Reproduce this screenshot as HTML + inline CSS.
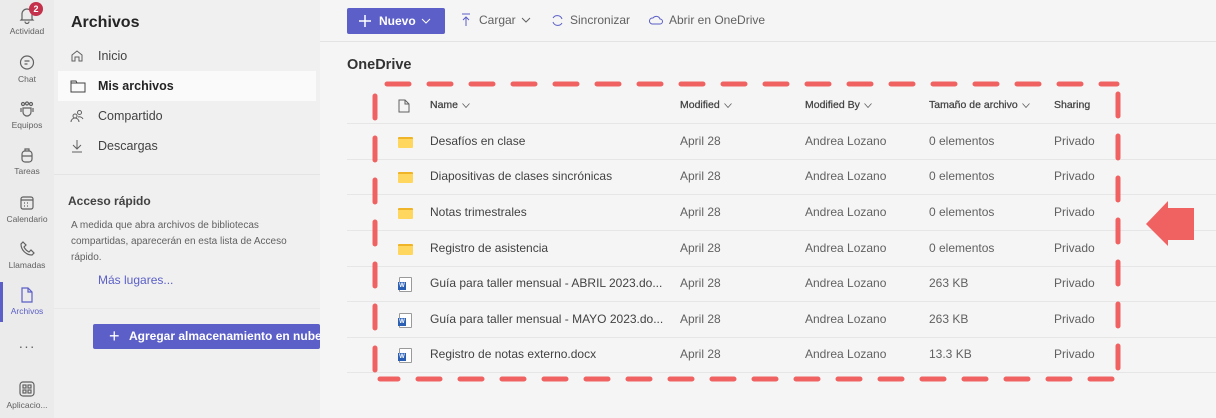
<!DOCTYPE html>
<html><head><meta charset="utf-8"><style>
*{box-sizing:border-box;margin:0;padding:0}
body{width:1216px;height:418px;overflow:hidden;background:#f5f5f5;font-family:"Liberation Sans",sans-serif;position:relative;color:#242424}
.rail{position:absolute;left:0;top:0;width:54px;height:418px;background:#ebebeb}
.ri{position:absolute;left:0;width:54px;text-align:center;font-size:8.5px;color:#616161}
.ri svg{display:block;margin:0 auto 2px}
.side{position:absolute;left:54px;top:0;width:266px;height:418px;background:#f0f0f0}
.main{position:absolute;left:320px;top:0;right:0;height:418px;background:#f5f5f5}
.abs{position:absolute}
.nav{position:absolute;left:0;width:262px;height:30px;font-size:12.5px;color:#424242;line-height:30px;padding-left:44px}
.nav svg{position:absolute;left:16px;top:8px}
.row{position:absolute;left:347px;width:869px;height:36px;border-bottom:1px solid #e6e6e6;font-size:12px;color:#616161;line-height:35px}
.row span{position:absolute}
.row .n{left:83px;color:#424242}
.c2{left:333px}.c3{left:458px}.c4{left:582px}.c5{left:707px}
.hd{font-size:10.5px;color:#424242}
.hd span{-webkit-text-stroke:0.25px #424242}
.ch{display:inline-block;width:8px;height:5px;margin-left:4px;vertical-align:middle}
i.f{position:absolute;left:51px;top:13px;width:15px;height:11px;background:#ffd75e;border-top:2px solid #f0b429;border-radius:1px}
i.w{position:absolute;left:52px;top:11px;width:13px;height:15px;border:1px solid #9a9a9a;background:#fff;border-radius:1px}
i.w:after{content:"W";position:absolute;left:-2px;top:4px;width:8px;height:8px;background:#2b5fb4;color:#fff;font-size:6px;line-height:8px;text-align:center;font-style:normal;font-weight:bold}
</style></head><body>
<div class="rail">
 <div class="ri" style="top:6px"><svg width="18" height="18" viewBox="0 0 18 18" fill="none" stroke="#616161" stroke-width="1.2"><path d="M4 13V8a5 5 0 0110 0v5l1 1H3z"/><path d="M7 15.5a2 2 0 004 0"/></svg>Actividad</div>
 <div style="position:absolute;left:29px;top:2px;width:14px;height:14px;border-radius:7px;background:#c4314b;color:#fff;font-size:9px;font-weight:bold;text-align:center;line-height:14px">2</div>
 <div class="ri" style="top:54px"><svg width="18" height="18" viewBox="0 0 18 18" fill="none" stroke="#616161" stroke-width="1.2"><circle cx="9" cy="8.5" r="6.5"/><path d="M6.5 7h5M6.5 10h3"/></svg>Chat</div>
 <div class="ri" style="top:100px"><svg width="20" height="18" viewBox="0 0 20 18" fill="none" stroke="#616161" stroke-width="1.2"><circle cx="6" cy="4" r="1.5"/><circle cx="10" cy="3.5" r="1.5"/><circle cx="14" cy="4" r="1.5"/><path d="M6 8h8v4a4 4 0 01-8 0z"/><path d="M4 8v4M16 8v4"/></svg>Equipos</div>
 <div class="ri" style="top:146px"><svg width="18" height="18" viewBox="0 0 18 18" fill="none" stroke="#616161" stroke-width="1.2"><rect x="4" y="5" width="10" height="11" rx="3"/><path d="M7 5V3h4v2M4 10h10"/></svg>Tareas</div>
 <div class="ri" style="top:194px"><svg width="18" height="18" viewBox="0 0 18 18" fill="none" stroke="#616161" stroke-width="1.2"><rect x="3" y="3" width="12" height="12" rx="2"/><path d="M3 6h12M6 9h1M9 9h1M6 12h1M9 12h1"/></svg>Calendario</div>
 <div class="ri" style="top:240px"><svg width="18" height="18" viewBox="0 0 18 18" fill="none" stroke="#616161" stroke-width="1.2"><path d="M5 2l3 3-2 2c1 2 3 4 5 5l2-2 3 3-2 2C8 15 3 10 3 4z"/></svg>Llamadas</div>
 <div style="position:absolute;left:0;top:282px;width:3px;height:40px;background:#5b5fc7"></div>
 <div class="ri" style="top:286px;color:#5b5fc7"><svg width="18" height="18" viewBox="0 0 18 18" fill="none" stroke="#5b5fc7" stroke-width="1.2"><path d="M4 2h6l4 4v10H4z"/><path d="M10 2v4h4"/></svg>Archivos</div>
 <div class="ri" style="top:338px;font-size:14px;letter-spacing:1px">···</div>
 <div class="ri" style="top:380px"><svg width="18" height="18" viewBox="0 0 18 18" fill="none" stroke="#616161" stroke-width="1.2"><rect x="2" y="2" width="14" height="14" rx="3"/><rect x="5" y="5" width="3" height="3"/><rect x="10" y="5" width="3" height="3"/><rect x="5" y="10" width="3" height="3"/><rect x="10" y="10" width="3" height="3"/></svg>Aplicacio...</div>
</div>
<div class="side">
 <div class="abs" style="left:17px;top:14px;font-size:16px;font-weight:bold">Archivos</div>
 <div class="nav" style="top:41px"><svg width="14" height="14" viewBox="0 0 14 14" fill="none" stroke="#616161" stroke-width="1"><path d="M2 6l5-4 5 4v6H9V8H5v4H2z"/></svg>Inicio</div>
 <div class="nav" style="top:71px;background:#fafafa;color:#242424;font-weight:bold;width:258px;left:4px;padding-left:40px"><svg width="16" height="14" viewBox="0 0 16 14" fill="none" stroke="#424242" stroke-width="1" style="left:12px"><path d="M1 2h5l1 2h8v9H1z"/><path d="M1 4h14"/></svg>Mis archivos</div>
 <div class="nav" style="top:101px"><svg width="14" height="14" viewBox="0 0 14 14" fill="none" stroke="#616161" stroke-width="1"><circle cx="5" cy="7" r="2"/><circle cx="9.5" cy="3.5" r="2"/><path d="M1 13a4 4 0 018 0M8 8a4 4 0 015 2"/></svg>Compartido</div>
 <div class="nav" style="top:131px"><svg width="14" height="14" viewBox="0 0 14 14" fill="none" stroke="#616161" stroke-width="1"><path d="M7 1v9M3 6l4 4 4-4M2 13h10"/></svg>Descargas</div>
 <div class="abs" style="left:0;top:174px;width:266px;border-top:1px solid #e4e4e4"></div>
 <div class="abs" style="left:14px;top:194px;font-size:12px;color:#424242;font-weight:bold">Acceso rápido</div>
 <div class="abs" style="left:17px;top:218px;width:230px;font-size:10px;color:#616161;line-height:16px">A medida que abra archivos de bibliotecas compartidas, aparecerán en esta lista de Acceso rápido.</div>
 <div class="abs" style="left:44px;top:273px;font-size:12px;color:#5b5fc7">Más lugares...</div>
 <div class="abs" style="left:0;top:308px;width:266px;border-top:1px solid #e8e8e8"></div>
 <div class="abs" style="left:39px;top:324px;width:227px;height:25px;background:#5b5fc7;border-radius:2px;color:#fff;font-size:12px;font-weight:bold;line-height:25px;padding-left:36px;white-space:nowrap;overflow:hidden">Agregar almacenamiento en nube<span style="position:absolute;left:16px;top:0;font-size:18px;font-weight:normal">+</span></div>
</div>
<div class="main">
 <div class="abs" style="left:0;top:0;width:896px;height:42px;border-bottom:1px solid #e3e3e3;background:#f5f5f5"></div>
 <div class="abs" style="left:27px;top:8px;width:98px;height:26px;background:#5b5fc7;border-radius:2px;color:#fff;font-size:12px;font-weight:bold;line-height:26px;padding-left:32px">Nuevo<svg style="position:absolute;left:12px;top:7px" width="12" height="12" viewBox="0 0 12 12" stroke="#fff" stroke-width="1.5"><path d="M6 0v12M0 6h12"/></svg><svg style="position:absolute;left:74px;top:10px" width="10" height="6" viewBox="0 0 10 6" fill="none" stroke="#fff"><path d="M1 1l4 4 4-4"/></svg></div>
 <svg class="abs" style="left:141px;top:13px" width="10" height="14" viewBox="0 0 10 14" fill="none" stroke="#5b5fc7"><path d="M1 1h8M5 13V4M2 7l3-3 3 3"/></svg>
 <div class="abs" style="left:159px;top:13px;font-size:12px;color:#616161">Cargar</div>
 <svg class="abs" style="left:201px;top:17px" width="10" height="6" viewBox="0 0 10 6" fill="none" stroke="#616161"><path d="M1 1l4 4 4-4"/></svg>
 <svg class="abs" style="left:231px;top:14px" width="13" height="13" viewBox="0 0 13 13" fill="none" stroke="#5b5fc7"><path d="M11 5A5 5 0 002 4M2 8a5 5 0 009 1"/></svg>
 <div class="abs" style="left:250px;top:13px;font-size:12px;color:#616161">Sincronizar</div>
 <svg class="abs" style="left:329px;top:15px" width="14" height="10" viewBox="0 0 14 10" fill="none" stroke="#5b5fc7"><path d="M3 9h8a2.5 2.5 0 000-5 4 4 0 00-7-1A3 3 0 003 9z"/></svg>
 <div class="abs" style="left:349px;top:13px;font-size:12px;color:#616161">Abrir en OneDrive</div>
 <div class="abs" style="left:27px;top:57px;font-size:14.5px;font-weight:bold;color:#333">OneDrive</div>
</div>
<div class="row hd" style="top:88px"><svg class="abs" style="left:51px;top:11px" width="12" height="14" viewBox="0 0 12 14" fill="none" stroke="#616161"><path d="M1 1h6l4 4v8H1z"/><path d="M7 1v4h4"/></svg>
<span class="n">Name<svg class="ch" viewBox="0 0 8 5" fill="none" stroke="#616161" stroke-width="0.8"><path d="M.5.5l3.5 4 3.5-4"/></svg></span>
<span class="c2">Modified<svg class="ch" viewBox="0 0 8 5" fill="none" stroke="#616161" stroke-width="0.8"><path d="M.5.5l3.5 4 3.5-4"/></svg></span>
<span class="c3">Modified By<svg class="ch" viewBox="0 0 8 5" fill="none" stroke="#616161" stroke-width="0.8"><path d="M.5.5l3.5 4 3.5-4"/></svg></span>
<span class="c4">Tamaño de archivo<svg class="ch" viewBox="0 0 8 5" fill="none" stroke="#616161" stroke-width="0.8"><path d="M.5.5l3.5 4 3.5-4"/></svg></span>
<span class="c5">Sharing</span></div>
<div class="row" style="top:124px"><i class="f"></i><span class="n">Desafíos en clase</span><span class="c2">April 28</span><span class="c3">Andrea Lozano</span><span class="c4">0 elementos</span><span class="c5">Privado</span></div>
<div class="row" style="top:159px"><i class="f"></i><span class="n">Diapositivas de clases sincrónicas</span><span class="c2">April 28</span><span class="c3">Andrea Lozano</span><span class="c4">0 elementos</span><span class="c5">Privado</span></div>
<div class="row" style="top:195px"><i class="f"></i><span class="n">Notas trimestrales</span><span class="c2">April 28</span><span class="c3">Andrea Lozano</span><span class="c4">0 elementos</span><span class="c5">Privado</span></div>
<div class="row" style="top:231px"><i class="f"></i><span class="n">Registro de asistencia</span><span class="c2">April 28</span><span class="c3">Andrea Lozano</span><span class="c4">0 elementos</span><span class="c5">Privado</span></div>
<div class="row" style="top:266px"><i class="w"></i><span class="n">Guía para taller mensual - ABRIL 2023.do...</span><span class="c2">April 28</span><span class="c3">Andrea Lozano</span><span class="c4">263 KB</span><span class="c5">Privado</span></div>
<div class="row" style="top:302px"><i class="w"></i><span class="n">Guía para taller mensual - MAYO 2023.do...</span><span class="c2">April 28</span><span class="c3">Andrea Lozano</span><span class="c4">263 KB</span><span class="c5">Privado</span></div>
<div class="row" style="top:337px"><i class="w"></i><span class="n">Registro de notas externo.docx</span><span class="c2">April 28</span><span class="c3">Andrea Lozano</span><span class="c4">13.3 KB</span><span class="c5">Privado</span></div>
<svg class="abs" style="position:absolute;left:0;top:0" width="1216" height="418">
<g stroke="#f06262" stroke-width="5" stroke-linecap="round" fill="none" stroke-dasharray="22 20">
<path d="M387 84H1117"/>
<path d="M1118 94V370"/>
<path d="M1112 379H380"/>
<path d="M375 370V94"/>
</g>
<path d="M1194 208H1168V201L1146 224L1168 246V240H1194Z" fill="#f06262"/>
</svg>
</body></html>
